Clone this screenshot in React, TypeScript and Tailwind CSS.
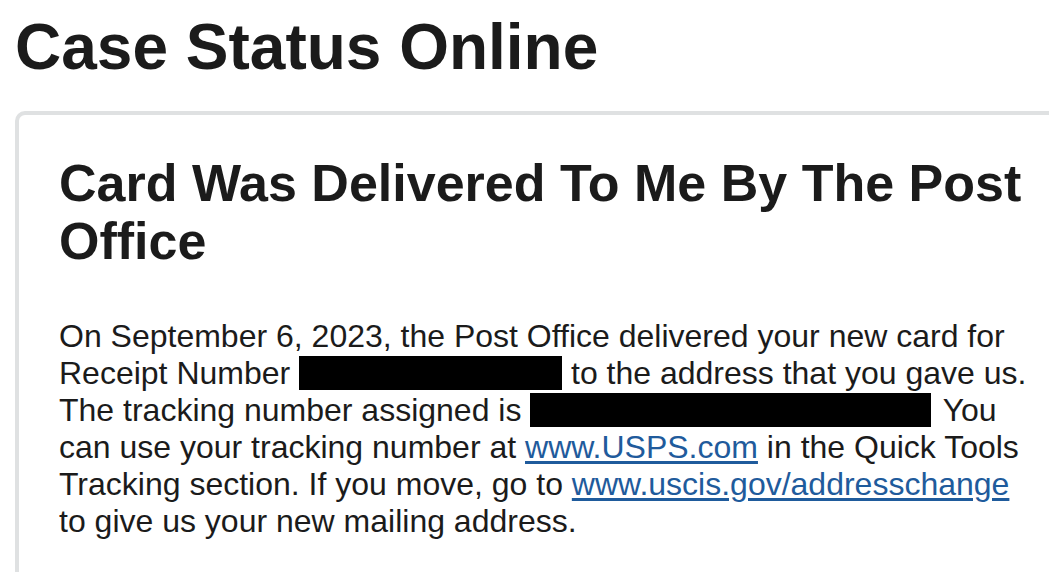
export default function App() {
  return (
    <div
      className="w-[1049px] h-[572px] overflow-hidden bg-white text-[#1b1b1b] pl-[15px]"
      style={{ fontFamily: '"Liberation Sans", Arial, Helvetica, sans-serif' }}
    >
      <h1 className="mt-[11px] text-[64px] leading-[72px] font-bold">Case Status Online</h1>
      <div className="mt-[28px] w-[1074px] border-[4px] border-[#dfe1e2] rounded-tl-[10px] pt-[39px] pl-[40px] pr-[49px] pb-[40px]">
        <h2 className="text-[52px] leading-[58px] font-bold">
          Card Was Delivered To Me By The Post Office
        </h2>
        <p className="mt-[48px] text-[32px] leading-[37px]">
          On September 6, 2023, the Post Office delivered your new card for Receipt Number{" "}
          <span className="inline-block w-[263px] h-[34px] bg-black align-[-6px]"></span> to the address
          that you gave us. The tracking number assigned is{" "}
          <span className="inline-block w-[401px] h-[34px] bg-black align-[-6px] mr-[3px]"></span> You can
          use your tracking number at{" "}
          <a href="#" className="text-[#1f5b9c] underline underline-offset-[3px]">
            www.USPS.com
          </a>{" "}
          in the Quick Tools Tracking section. If you move, go to{" "}
          <a href="#" className="text-[#1f5b9c] underline underline-offset-[3px]">
            www.uscis.gov/addresschange
          </a>{" "}
          to give us your new mailing address.
        </p>
      </div>
    </div>
  );
}
